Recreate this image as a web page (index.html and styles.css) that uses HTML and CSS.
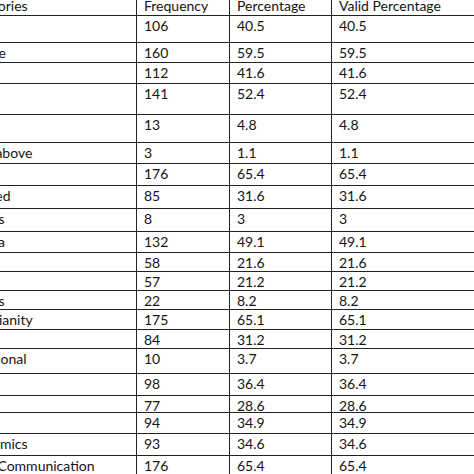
FILE: index.html
```html
<!DOCTYPE html>
<html lang="en">
<head>
<meta charset="utf-8">
<title>Frequency table</title>
<link rel="stylesheet" href="styles.css">
</head>
<body>
<div class="freq" role="table">
  <div class="row head h20" role="row"><div class="cell" role="columnheader">Categories</div><div class="cell" role="columnheader">Frequency</div><div class="cell" role="columnheader">Percentage</div><div class="cell" role="columnheader">Valid Percentage</div></div>
  <div class="row h27" role="row"><div class="cell">Male</div><div class="cell">106</div><div class="cell">40.5</div><div class="cell">40.5</div></div>
  <div class="row h20" role="row"><div class="cell">Female</div><div class="cell">160</div><div class="cell">59.5</div><div class="cell">59.5</div></div>
  <div class="row h21" role="row"><div class="cell">18-30</div><div class="cell">112</div><div class="cell">41.6</div><div class="cell">41.6</div></div>
  <div class="row h31" role="row"><div class="cell">31-40</div><div class="cell">141</div><div class="cell">52.4</div><div class="cell">52.4</div></div>
  <div class="row h28" role="row"><div class="cell">41-44</div><div class="cell">13</div><div class="cell">4.8</div><div class="cell">4.8</div></div>
  <div class="row h21" role="row"><div class="cell">45 &amp; above</div><div class="cell">3</div><div class="cell">1.1</div><div class="cell">1.1</div></div>
  <div class="row h22" role="row"><div class="cell">Single</div><div class="cell">176</div><div class="cell">65.4</div><div class="cell">65.4</div></div>
  <div class="row h23" role="row"><div class="cell">Married</div><div class="cell">85</div><div class="cell">31.6</div><div class="cell">31.6</div></div>
  <div class="row h23" role="row"><div class="cell">Others</div><div class="cell">8</div><div class="cell">3</div><div class="cell">3</div></div>
  <div class="row h21" role="row"><div class="cell">Yoruba</div><div class="cell">132</div><div class="cell">49.1</div><div class="cell">49.1</div></div>
  <div class="row h19" role="row"><div class="cell">Edo</div><div class="cell">58</div><div class="cell">21.6</div><div class="cell">21.6</div></div>
  <div class="row h19" role="row"><div class="cell">Igbo</div><div class="cell">57</div><div class="cell">21.2</div><div class="cell">21.2</div></div>
  <div class="row h19" role="row"><div class="cell">Others</div><div class="cell">22</div><div class="cell">8.2</div><div class="cell">8.2</div></div>
  <div class="row h20" role="row"><div class="cell">Christianity</div><div class="cell">175</div><div class="cell">65.1</div><div class="cell">65.1</div></div>
  <div class="row h19" role="row"><div class="cell">Islam</div><div class="cell">84</div><div class="cell">31.2</div><div class="cell">31.2</div></div>
  <div class="row h25" role="row"><div class="cell">Traditional</div><div class="cell">10</div><div class="cell">3.7</div><div class="cell">3.7</div></div>
  <div class="row h22" role="row"><div class="cell">Arts</div><div class="cell">98</div><div class="cell">36.4</div><div class="cell">36.4</div></div>
  <div class="row h17" role="row"><div class="cell">Law</div><div class="cell">77</div><div class="cell">28.6</div><div class="cell">28.6</div></div>
  <div class="row h21" role="row"><div class="cell">Film</div><div class="cell">94</div><div class="cell">34.9</div><div class="cell">34.9</div></div>
  <div class="row h22" role="row"><div class="cell">Economics</div><div class="cell">93</div><div class="cell">34.6</div><div class="cell">34.6</div></div>
  <div class="row h25" role="row"><div class="cell">Mass Communication</div><div class="cell">176</div><div class="cell">65.4</div><div class="cell">65.4</div></div>
</div>
</body>
</html>
```
FILE: styles.css
```css
html, body {
  margin: 0;
  padding: 0;
  background: #ffffff;
  overflow: hidden;
}

.freq {
  width: 538px;
  margin: -5px 0 0 -45px;
  font-family: Lato, "Liberation Sans", sans-serif;
  font-size: 14px;
  line-height: 16px;
  color: #141414;
  border-top: 1px solid #222222;
}

.row {
  box-sizing: border-box;
  display: grid;
  grid-template-columns: 182px 93px 102px 161px;
  border-bottom: 1px solid #222222;
}

.cell {
  box-sizing: border-box;
  border-right: 1px solid #222222;
  padding: 2px 7px 0 7px;
  white-space: nowrap;
  overflow: hidden;
}

.h17 { height: 17px; }
.h19 { height: 19px; }
.h20 { height: 20px; }
.h21 { height: 21px; }
.h22 { height: 22px; }
.h23 { height: 23px; }
.h25 { height: 25px; }
.h27 { height: 27px; }
.h28 { height: 28px; }
.h31 { height: 31px; }
```
